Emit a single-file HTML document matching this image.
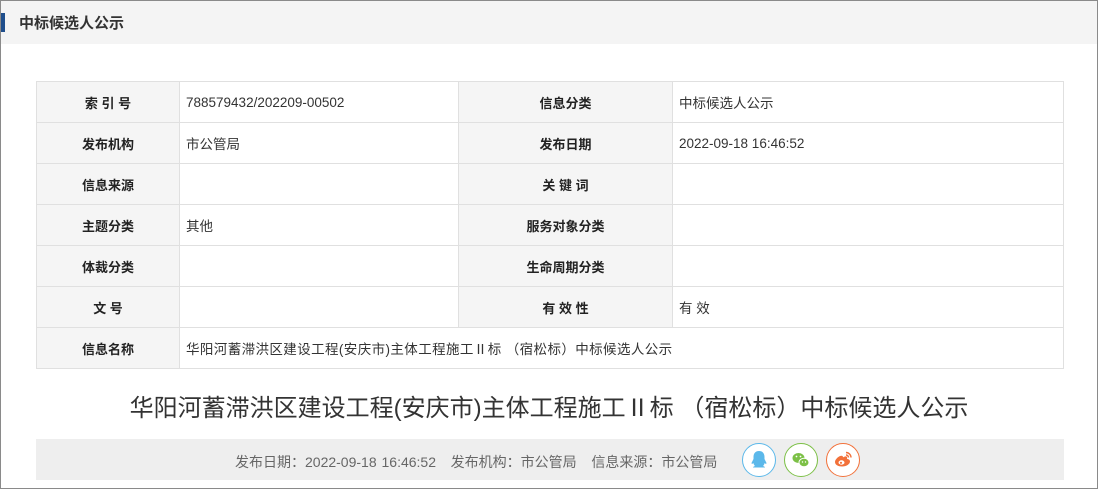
<!DOCTYPE html>
<html><head><meta charset="utf-8"><style>
*{margin:0;padding:0;box-sizing:border-box}
body{width:1098px;height:489px;background:#fff;font-family:"Liberation Sans","Noto Sans CJK SC",sans-serif;position:relative;overflow:hidden}
.frame{position:absolute;left:0;top:0;width:1098px;height:489px;border:1px solid #8a8a8a}
.hd{position:absolute;left:1px;top:1px;width:1096px;height:43px;background:#f4f4f4}
.bar{position:absolute;left:1px;top:13px;width:4px;height:19px;background:#1f4e8c}
.hd span{position:absolute;left:18px;top:11px;font-size:15px;font-weight:bold;color:#333}
table{position:absolute;left:36px;top:81px;border-collapse:collapse;width:1028px;font-size:13.5px;color:#333}
td{border:1px solid #e0e0e0;height:41px;padding:0 6px}
td.k{background:#f5f5f5;font-weight:bold;text-align:center;color:#222;font-size:13px}
td.w{letter-spacing:0.4px}
h1{position:absolute;left:0;width:1098px;top:388px;text-align:center;font-size:24px;font-weight:normal;color:#333}
.ft{position:absolute;left:36px;top:439px;width:1028px;height:41px;background:#eee;font-size:14px;color:#666}
.ft .t{position:absolute;left:199px;top:13px;white-space:nowrap;word-spacing:1px}
.ic{position:absolute;top:4px;width:34px;height:34px;border-radius:50%;border:1px solid;background:#fff}
</style></head><body>
<div class="frame"></div>
<div class="hd"><span>中标候选人公示</span></div><div class="bar"></div>
<table>
<colgroup><col style="width:143px"><col style="width:279px"><col style="width:214px"><col></colgroup>
<tr><td class="k">索 引 号</td><td>788579432/202209-00502</td><td class="k">信息分类</td><td>中标候选人公示</td></tr>
<tr><td class="k">发布机构</td><td>市公管局</td><td class="k">发布日期</td><td>2022-09-18 16:46:52</td></tr>
<tr><td class="k">信息来源</td><td></td><td class="k">关 键 词</td><td></td></tr>
<tr><td class="k">主题分类</td><td>其他</td><td class="k">服务对象分类</td><td></td></tr>
<tr><td class="k">体裁分类</td><td></td><td class="k">生命周期分类</td><td></td></tr>
<tr><td class="k">文 号</td><td></td><td class="k">有 效 性</td><td>有 效</td></tr>
<tr><td class="k">信息名称</td><td colspan="3" class="w">华阳河蓄滞洪区建设工程(安庆市)主体工程施工Ⅱ标 （宿松标）中标候选人公示</td></tr>
</table>
<h1>华阳河蓄滞洪区建设工程(安庆市)主体工程施工Ⅱ标 （宿松标）中标候选人公示</h1>
<div class="ft"><span class="t">发布日期：2022-09-18 16:46:52 &nbsp; 发布机构：市公管局 &nbsp; 信息来源：市公管局</span>
<div class="ic" style="left:706px;border-color:#5bb8ea"><svg width="32" height="32" viewBox="0 0 32 32"><path d="M16 7c-4 0-5.5 3-5.5 6v2l-2 4c0 1 1 1 2 0 0 1 .5 2 1.5 3-1.5.5-2 1-2 1.5h12c0-.5-.5-1-2-1.5 1-1 1.5-2 1.5-3 1 1 2 1 2 0l-2-4v-2c0-3-1.5-6-5.5-6z" fill="#5bb8ea"/></svg></div>
<div class="ic" style="left:748px;border-color:#7cc046"><svg width="32" height="32" viewBox="0 0 32 32"><ellipse cx="13.5" cy="14" rx="6" ry="5" fill="#7cc046"/><ellipse cx="19" cy="18.5" rx="5" ry="4.2" fill="#7cc046" stroke="#fff" stroke-width="1"/><circle cx="11.5" cy="12.5" r=".9" fill="#fff"/><circle cx="15.5" cy="12.5" r=".9" fill="#fff"/><circle cx="17.5" cy="18" r=".7" fill="#fff"/><circle cx="20.5" cy="18" r=".7" fill="#fff"/></svg></div>
<div class="ic" style="left:790px;border-color:#f2713a"><svg width="32" height="32" viewBox="0 0 32 32"><path d="M13 12c-3 1.5-5 4-5 6 0 3 3.5 4.5 7 4.5 4.5 0 8-2.5 8-5 0-2-2-2.5-3-2.5.5-1.5 0-3-2-2.5-1 .3-2 .8-2 .8 0-1.5-1-2-3-1.3z" fill="#f2713a"/><ellipse cx="14.5" cy="18.5" rx="3" ry="2.2" fill="#fff"/><circle cx="14" cy="18.8" r="1.1" fill="#f2713a"/><path d="M19 8.5a5 5 0 0 1 5 5M19 11a2.5 2.5 0 0 1 2.5 2.5" stroke="#f2713a" stroke-width="1.4" fill="none"/></svg></div>
</div>
</body></html>
